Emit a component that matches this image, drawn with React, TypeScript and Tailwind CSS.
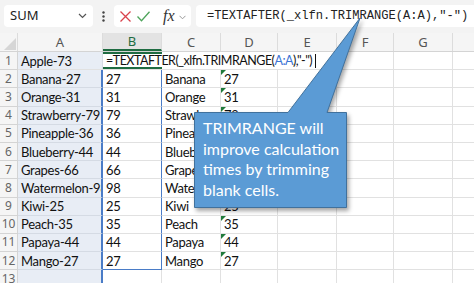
import React from "react";

const cellFont = {
  fontFamily: 'Lato, "Liberation Sans", sans-serif',
};

const rows: [string, string, string, string][] = [
  ["Apple-73", "", "", ""],
  ["Banana-27", "27", "Banana", "27"],
  ["Orange-31", "31", "Orange", "31"],
  ["Strawberry-79", "79", "Strawberry", "79"],
  ["Pineapple-36", "36", "Pineapple", "36"],
  ["Blueberry-44", "44", "Blueberry", "44"],
  ["Grapes-66", "66", "Grapes", "66"],
  ["Watermelon-98", "98", "Watermelon", "98"],
  ["Kiwi-25", "25", "Kiwi", "25"],
  ["Peach-35", "35", "Peach", "35"],
  ["Papaya-44", "44", "Papaya", "44"],
  ["Mango-27", "27", "Mango", "27"],
  ["", "", "", ""],
];

const base =
  "border-r border-b border-[#e1e1e1] overflow-hidden whitespace-nowrap flex items-center pl-[3px] pt-[1px] text-[13px] tracking-[-0.3px] leading-none text-[#111]";

function RowHeader({ n }: { n: number }) {
  return (
    <div className="border-r border-b border-[#d4d4d4] bg-[#f5f5f5] flex items-center justify-center text-[12px] text-[#666] leading-none font-['Noto_Sans',sans-serif]">
      {n}
    </div>
  );
}

export default function App() {
  return (
    <div className="relative w-[474px] h-[283px] overflow-hidden bg-white flex flex-col">
      {/* Top bar */}
      <div className="h-[33px] shrink-0 bg-[#f3f3f3] flex items-start pt-[5px] pl-[4px] gap-0">
        <div className="w-[89px] h-[22px] bg-white rounded-[4px] flex items-center justify-between pl-[6px] pr-[6px] text-[13px] text-[#222] font-['Noto_Sans',sans-serif]">
          <span>SUM</span>
          <svg width="9" height="6" viewBox="0 0 9 6">
            <path d="M1 1 L4.5 4.5 L8 1" fill="none" stroke="#555" strokeWidth="1.2" />
          </svg>
        </div>
        <div className="w-[21px] h-[22px] flex items-center justify-center">
          <svg width="3" height="11" viewBox="0 0 3 11">
            <circle cx="1.5" cy="1.5" r="1.2" fill="#444" />
            <circle cx="1.5" cy="5.5" r="1.2" fill="#444" />
            <circle cx="1.5" cy="9.5" r="1.2" fill="#444" />
          </svg>
        </div>
        <div className="w-[77px] h-[22px] bg-white rounded-[4px] flex items-center pl-[6px] gap-[6px]">
          <svg width="11" height="11" viewBox="0 0 11 11">
            <path d="M0.5 0.5 L10.5 10.5 M10.5 0.5 L0.5 10.5" stroke="#d9424c" strokeWidth="1.3" />
          </svg>
          <svg width="13" height="11" viewBox="0 0 13 11">
            <path d="M0.5 5.5 L4.5 9.8 L12.5 0.8" fill="none" stroke="#4ea45b" strokeWidth="1.3" />
          </svg>
          <span className="ml-[7px] text-[16px] italic leading-none text-[#333] font-['Liberation_Serif',serif]">fx</span>
          <svg width="7" height="5" viewBox="0 0 7 5" className="-ml-[2px] mt-[2px]">
            <path d="M0.5 0.8 L3.5 3.8 L6.5 0.8" fill="none" stroke="#999" strokeWidth="1" />
          </svg>
        </div>
        <div className="ml-[5px] flex-1 h-[22px] bg-white rounded-l-[4px] flex items-center pl-[11px] text-[12.1px] text-[#222] whitespace-nowrap font-['Liberation_Mono',monospace]">
          =TEXTAFTER(_xlfn.TRIMRANGE(A:A),"-")
        </div>
      </div>

      {/* Column headers */}
      <div className="h-[19px] shrink-0 grid grid-cols-[18px_85px_59px_59px_57px_59px_57px_59px_1fr] bg-[#f5f5f5] border-b border-[#d4d4d4] text-[13px] text-[#555] font-['Noto_Sans',sans-serif] leading-none">
        <div className="relative border-r border-[#dcdcdc]">
          <svg className="absolute right-[1px] bottom-[1px]" width="12" height="12" viewBox="0 0 12 12">
            <path d="M12 0 L12 12 L0 12 Z" fill="#d6d6d6" />
          </svg>
        </div>
        <div className="border-r border-[#dcdcdc] flex items-center justify-center">A</div>
        <div className="bg-[#e3e3e3] border-b-2 border-[#1e6b41] flex items-center justify-center text-[#1e6b41] border-r border-r-[#dcdcdc]">B</div>
        <div className="border-r border-[#dcdcdc] flex items-center justify-center">C</div>
        <div className="border-r border-[#dcdcdc] flex items-center justify-center">D</div>
        <div className="border-r border-[#dcdcdc] flex items-center justify-center">E</div>
        <div className="border-r border-[#dcdcdc] flex items-center justify-center">F</div>
        <div className="border-r border-[#dcdcdc] flex items-center justify-center">G</div>
        <div />
      </div>

      {/* Grid */}
      <div
        className="grid grid-cols-[18px_85px_59px_59px_57px_59px_57px_59px_1fr] auto-rows-[18.2px]"
        style={cellFont}
      >
        {rows.map((r, i) => {
          const n = i + 1;
          const [a, b, c, d] = r;
          if (n === 1) {
            return (
              <React.Fragment key={n}>
                <RowHeader n={n} />
                <div className={`${base} bg-[#e8edf5] border-r-[#d5dbe4]`}>{a}</div>
                <div className="col-span-4 relative border-b border-[#e1e1e1] bg-white flex items-center">
                  <div className="absolute left-0 top-0 w-[59px] h-full border-t-2 border-b-2 border-[#1e6b41]" />
                  <span className="relative pl-[3px] pt-[1px] text-[12.5px] tracking-[-0.5px] leading-none text-[#111] whitespace-nowrap">
                    =TEXTAFTER(_xlfn.TRIMRANGE(<span className="text-[#3a74d4]">A:A</span>),"-")
                  </span>
                  <span className="relative ml-[3px] w-[1px] h-[14px] bg-[#111]" />
                </div>
                <div className={base} />
                <div className={base} />
                <div className="border-b border-[#e1e1e1]" />
              </React.Fragment>
            );
          }
          const inSpill = n >= 2 && n <= 12;
          return (
            <React.Fragment key={n}>
              <RowHeader n={n} />
              <div className={`${base} bg-[#e8edf5] border-b-[#d5dbe4] border-r-2 border-r-[#4a7cc7]`}>{a}</div>
              <div
                className={`${base} ${inSpill ? "border-r-[#4a7cc7]" : ""} ${n === 12 ? "border-b-[#4a7cc7]" : ""}`}
              >
                {b}
              </div>
              <div className={base}>{c}</div>
              <div className={`${base} relative`}>
                {d && (
                  <div className="absolute left-0 top-0 w-0 h-0 border-t-[5px] border-r-[5px] border-t-[#1f7a3a] border-r-transparent" />
                )}
                {d}
              </div>
              <div className={base} />
              <div className={base} />
              <div className={base} />
              <div className="border-b border-[#e1e1e1]" />
            </React.Fragment>
          );
        })}
      </div>

      {/* Callout */}
      <svg
        className="absolute left-0 top-0 pointer-events-none drop-shadow-[2px_3px_2px_rgba(0,0,0,0.35)]"
        width="474"
        height="283"
        viewBox="0 0 474 283"
      >
        <path
          d="M194.5 112.5 H288 L360 18 L327 112.5 H346.5 V207.5 H194.5 Z"
          fill="#5b9bd5"
          stroke="#41719c"
          strokeWidth="1"
        />
      </svg>
      <div className="absolute left-[194px] top-[112px] w-[153px] h-[96px] pl-[9px] pt-[6px] text-white text-[16px] leading-[20.6px] font-['Lato',sans-serif]">
        TRIMRANGE will
        <br />
        improve calculation
        <br />
        times by trimming
        <br />
        blank cells.
      </div>
    </div>
  );
}
